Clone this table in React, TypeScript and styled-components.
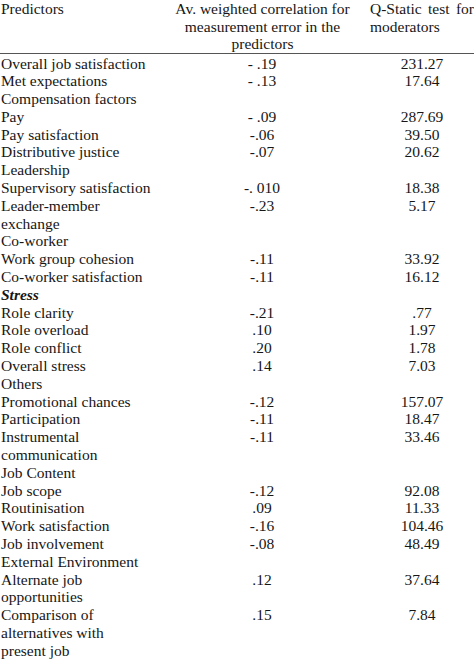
import React from "react";
import styled, { createGlobalStyle } from "styled-components";

const Global = createGlobalStyle`
  html, body { margin: 0; padding: 0; background: #ffffff; }
  body { font-family: "Liberation Serif", "Times New Roman", serif; color: #161616; }
`;

const Table = styled.div`
  width: 474px;
  display: grid;
  grid-template-columns: 168px 188px 118px;
  font-size: 15.5px;
  line-height: 17.8px;
`;

const HeadRow = styled.div`
  display: contents;
`;

const HeadCell = styled.div<{ $align: "left" | "center" | "justify" }>`
  padding: 0 0 0 ${(p) => (p.$align === "justify" ? "14px" : "1px")};
  line-height: 17.5px;
  text-align: ${(p) => p.$align};
  text-align-last: ${(p) => (p.$align === "center" ? "center" : "left")};
  border-bottom: 1px solid #555;
`;

const LabelCell = styled.div<{ $italic?: boolean }>`
  padding-left: 1px;
  white-space: pre-line;
  font-style: ${(p) => (p.$italic ? "italic" : "normal")};
  font-weight: ${(p) => (p.$italic ? 700 : 400)};
`;

const ValueCell = styled.div<{ $pad?: number }>`
  text-align: center;
  padding-left: ${(p) => p.$pad ?? 0}px;
`;

const BodyGap = styled.div`
  grid-column: 1 / -1;
  height: 1px;
`;

type Row = { label: string; corr?: string; q?: string; italic?: boolean };

const rows: Row[] = [
  { label: "Overall job satisfaction", corr: "- .19", q: "231.27" },
  { label: "Met expectations", corr: "- .13", q: "17.64" },
  { label: "Compensation factors" },
  { label: "Pay", corr: "- .09", q: "287.69" },
  { label: "Pay satisfaction", corr: "-.06", q: "39.50" },
  { label: "Distributive justice", corr: "-.07", q: "20.62" },
  { label: "Leadership" },
  { label: "Supervisory satisfaction", corr: "-. 010", q: "18.38" },
  { label: "Leader-member\nexchange", corr: "-.23", q: "5.17" },
  { label: "Co-worker" },
  { label: "Work group cohesion", corr: "-.11", q: "33.92" },
  { label: "Co-worker satisfaction", corr: "-.11", q: "16.12" },
  { label: "Stress", italic: true },
  { label: "Role clarity", corr: "-.21", q: ".77" },
  { label: "Role overload", corr: ".10", q: "1.97" },
  { label: "Role conflict", corr: ".20", q: "1.78" },
  { label: "Overall stress", corr: ".14", q: "7.03" },
  { label: "Others" },
  { label: "Promotional chances", corr: "-.12", q: "157.07" },
  { label: "Participation", corr: "-.11", q: "18.47" },
  { label: "Instrumental\ncommunication", corr: "-.11", q: "33.46" },
  { label: "Job Content" },
  { label: "Job scope", corr: "-.12", q: "92.08" },
  { label: "Routinisation", corr: ".09", q: "11.33" },
  { label: "Work satisfaction", corr: "-.16", q: "104.46" },
  { label: "Job involvement", corr: "-.08", q: "48.49" },
  { label: "External Environment" },
  { label: "Alternate job\nopportunities", corr: ".12", q: "37.64" },
  { label: "Comparison of\nalternatives with\npresent job", corr: ".15", q: "7.84" },
];

export default function App() {
  return (
    <>
      <Global />
      <Table>
        <HeadRow>
          <HeadCell $align="left">Predictors</HeadCell>
          <HeadCell $align="center">
            Av. weighted correlation for measurement error in the predictors
          </HeadCell>
          <HeadCell $align="justify">Q-Static test for moderators</HeadCell>
        </HeadRow>
        <BodyGap />
        {rows.map((r, i) => (
          <React.Fragment key={i}>
            <LabelCell $italic={r.italic}>{r.label}</LabelCell>
            <ValueCell>{r.corr ?? ""}</ValueCell>
            <ValueCell $pad={14}>{r.q ?? ""}</ValueCell>
          </React.Fragment>
        ))}
      </Table>
    </>
  );
}
